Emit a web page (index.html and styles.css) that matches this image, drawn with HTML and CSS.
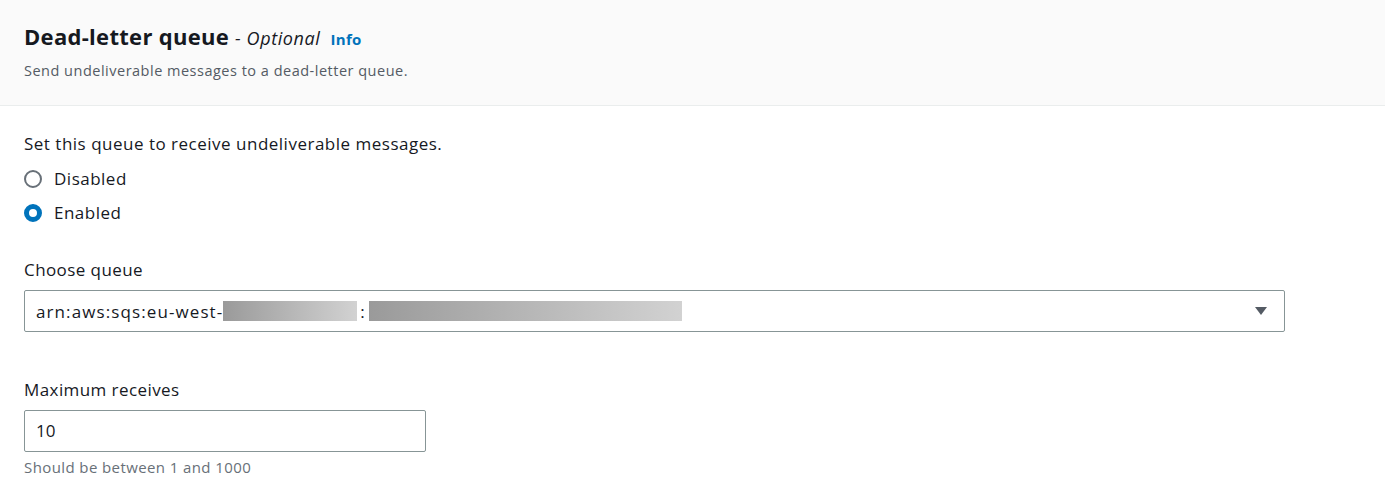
FILE: index.html
```html
<!DOCTYPE html>
<html>
<head>
<meta charset="utf-8">
<link rel="stylesheet" href="styles.css">
</head>
<body>
<div class="panel">
  <div class="panel-header">
    <h2 class="title">Dead-letter queue <span class="optional">- Optional</span> <a class="info">Info</a></h2>
    <p class="desc">Send undeliverable messages to a dead-letter queue.</p>
  </div>
  <div class="panel-body">
    <div class="group">
      <div class="group-label">Set this queue to receive undeliverable messages.</div>
      <label class="radio"><span class="dot"></span>Disabled</label>
      <label class="radio"><span class="dot checked"></span>Enabled</label>
    </div>
    <div class="field">
      <div class="field-label">Choose queue</div>
      <div class="select">
        <span class="select-text">arn:aws:sqs:eu-west-<span class="redact r1"></span>:<span class="redact r2"></span></span>
        <svg class="caret" width="14" height="10" viewBox="0 0 14 10"><path d="M1 1 H13 L7 9 Z" fill="#545b64"/></svg>
      </div>
    </div>
    <div class="field field-max">
      <div class="field-label">Maximum receives</div>
      <div class="input">10</div>
      <div class="hint">Should be between 1 and 1000</div>
    </div>
  </div>
</div>
</body>
</html>
```

FILE: styles.css
```css
html, body {
  margin: 0;
  padding: 0;
  background: #ffffff;
  font-family: "Open Sans", "Noto Sans", sans-serif;
  color: #16191f;
}
.panel {
  width: 1385px;
}
.panel-header {
  background: #fafafa;
  border-bottom: 1px solid #eaeded;
  height: 106px;
  box-sizing: border-box;
  padding: 22px 24px 0 24px;
}
.title {
  margin: 0;
  font-size: 22px;
  line-height: 28px;
  font-weight: 700;
  color: #16191f;
  letter-spacing: 0.3px;
}
.optional {
  font-weight: 400;
  font-style: italic;
  font-size: 18px;
  letter-spacing: 0.6px;
}
.info {
  font-size: 15px;
  color: #0073bb;
  font-weight: 700;
  margin-left: 4px;
  letter-spacing: 0.3px;
}
.desc {
  margin: 8px 0 0;
  font-size: 14.5px;
  line-height: 20px;
  letter-spacing: 0.5px;
  color: #545b64;
}
.panel-body {
  padding: 26px 24px 0 24px;
}
.group-label {
  font-size: 17px;
  line-height: 24px;
  letter-spacing: 0.5px;
  margin-bottom: 6px;
}
.radio {
  display: flex;
  align-items: center;
  gap: 12px;
  font-size: 17px;
  letter-spacing: 0.5px;
  line-height: 30px;
  height: 34px;
}
.dot {
  width: 14px;
  height: 14px;
  border: 2px solid #687078;
  border-radius: 50%;
  box-sizing: content-box;
  flex: none;
}
.dot.checked {
  border: 5px solid #0073bb;
  width: 8px;
  height: 8px;
}
.field {
  margin-top: 28px;
}
.field-label {
  font-size: 17px;
  line-height: 24px;
  letter-spacing: 0.42px;
  margin-bottom: 8px;
}
.select {
  width: 1261px;
  height: 42px;
  box-sizing: border-box;
  border: 1px solid #879596;
  border-radius: 2px;
  display: flex;
  align-items: center;
  justify-content: space-between;
  padding: 0 16px 0 11px;
}
.select-text {
  display: flex;
  align-items: center;
  font-size: 17px;
  letter-spacing: 1.1px;
}
.redact {
  display: inline-block;
  height: 20px;
  background: linear-gradient(to right, #9a9a9a, #d2d2d2);
}
.r1 { width: 134px; margin-right: 3px; }
.r2 { width: 313px; margin-left: 3px; }
.field-max {
  margin-top: 46px;
}
.input {
  width: 402px;
  height: 42px;
  box-sizing: border-box;
  border: 1px solid #879596;
  border-radius: 2px;
  padding: 0 11px;
  font-size: 17px;
  line-height: 40px;
}
.hint {
  margin-top: 5px;
  font-size: 15px;
  line-height: 20px;
  letter-spacing: 0.4px;
  color: #687078;
}
```
